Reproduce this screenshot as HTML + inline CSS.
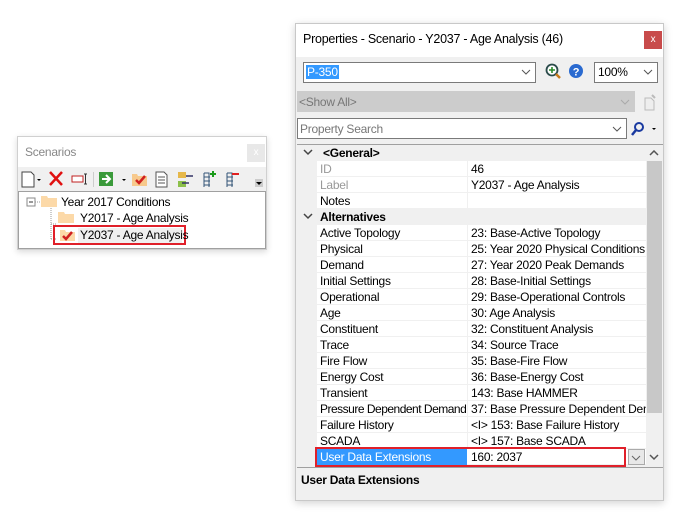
<!DOCTYPE html>
<html><head><style>
*{margin:0;padding:0;box-sizing:border-box}
body{width:688px;height:524px;background:#fff;font-family:"Liberation Sans",sans-serif;font-size:12px;color:#000;position:relative;overflow:hidden;letter-spacing:-0.25px}
.a{position:absolute}
.row{position:absolute;left:317px;width:329px;height:16px;border-bottom:1px solid #f0f0f0;background:#fff}
.row .n{position:absolute;left:3px;top:1px;white-space:nowrap;width:147px;overflow:hidden}
.row .v{position:absolute;left:154px;top:1px;white-space:nowrap;width:175px;overflow:hidden}
.row .d{position:absolute;left:150px;top:0;width:1px;height:16px;background:#f0f0f0}
.cat{position:absolute;left:297px;width:349px;height:16px;background:#f0f0f0;font-weight:bold}
.chev{position:absolute;left:6px;top:4px}
</style></head><body>
<!-- Scenarios window -->
<div class="a" style="left:17px;top:136px;width:250px;height:114px;border:1px solid #d0d0d0;background:#f0f0f0;box-shadow:0 2px 6px rgba(0,0,0,.15)"></div>
<div class="a" style="left:18px;top:137px;width:248px;height:30px;background:#fff"></div>
<div class="a" style="left:25px;top:145px;color:#888">Scenarios</div>
<div class="a" style="left:247px;top:144px;width:18px;height:18px;background:#e8e8e8;color:#fff;font-size:10px;text-align:center;line-height:18px">x</div>
<div class="a" style="left:18px;top:167px;width:248px;height:24px;background:#f0f0f0"></div>
<svg class="a" style="left:18px;top:167px" width="248" height="24">
<path d="M4 5h9l3 3v12H4z" fill="#fff" stroke="#444"/><path d="M19 12l2 2 2-2z" fill="#000"/>
<path d="M32 5l12 13M44 5L32 18" stroke="#e01010" stroke-width="2.5"/>
<rect x="54" y="9" width="11" height="6" fill="#fff" stroke="#c02020"/><path d="M66 7h3M67.5 7v10M66 17h3" stroke="#333"/>
<rect x="75" y="5" width="1" height="15" fill="#ccc"/>
<rect x="81" y="5" width="14" height="14" fill="#3a9a3a"/><path d="M84 12h7M88 8l4 4-4 4" stroke="#fff" stroke-width="2" fill="none"/>
<path d="M104 12l2 2 2-2z" fill="#000"/>
<path d="M114 7h5l1 2h9v10h-15z" fill="#f7c98c"/><path d="M118 13l3 3 6-7" stroke="#d02020" stroke-width="2.5" fill="none"/>
<path d="M138 5h8l3 3v12h-11z" fill="#fff" stroke="#555"/><path d="M140 10h7M140 13h7M140 16h7" stroke="#555"/>
<rect x="160" y="5" width="8" height="6" fill="#e6b84a"/><rect x="160" y="14" width="8" height="6" fill="#8cc04a"/><path d="M168 9h7M171 16h-7" stroke="#336" stroke-width="1.5"/>
<path d="M186 6h5v14M186 6v14M186 10h6M186 14h6M186 18h6" stroke="#357" fill="none"/><path d="M195 4v6M192 7h6" stroke="#1a9a1a" stroke-width="2"/>
<path d="M209 6h5v14M209 6v14M209 10h6M209 14h6M209 18h6" stroke="#357" fill="none"/><path d="M214 7h7" stroke="#e02020" stroke-width="2"/>
<rect x="237" y="12" width="8" height="8" fill="#ccc"/><path d="M238 15l3 3 3-3z" fill="#000"/>
</svg>
<div class="a" style="left:18px;top:191px;width:248px;height:58px;background:#fff;border:1px solid #a0a0a0"></div>
<svg class="a" style="left:20px;top:193px" width="180" height="52">
<rect x="7" y="5" width="8" height="8" fill="#fff" stroke="#888"/><path d="M9 9h4" stroke="#333"/>
<path d="M15 9h5M31 15v31M31 31h6M31 46h6" stroke="#999" stroke-dasharray="1 1"/>
<path d="M21 3h6l1 2h9v9H21z" fill="#fcd9a8"/>
<path d="M38 19h6l1 2h9v9H38z" fill="#fcd9a8"/>
</svg>
<div class="a" style="left:61px;top:195px">Year 2017 Conditions</div>
<div class="a" style="left:80px;top:211px">Y2017 - Age Analysis</div>
<div class="a" style="left:53px;top:225px;width:133px;height:20px;border:2px solid #e0202a"></div>
<svg class="a" style="left:58px;top:227px" width="20" height="16"><path d="M2 3h5l1 2h9v9H2z" fill="#fcd9a8"/><path d="M5 9l3 3 6-7" stroke="#d02020" stroke-width="2.5" fill="none"/></svg>
<div class="a" style="left:78px;top:228px;width:104px;height:15px;background:#f0f0f0"></div>
<div class="a" style="left:80px;top:228px">Y2037 - Age Analysis</div>

<!-- Properties window -->
<div class="a" style="left:295px;top:23px;width:369px;height:478px;border:1px solid #c8c8c8;background:#f0f0f0;box-shadow:0 2px 8px rgba(0,0,0,.18)"></div>
<div class="a" style="left:296px;top:24px;width:367px;height:33px;background:#fff"></div>
<div class="a" style="left:303px;top:32px;font-size:12.5px">Properties - Scenario - Y2037 - Age Analysis (46)</div>
<div class="a" style="left:644px;top:31px;width:18px;height:18px;background:#c84b4b;color:#fff;font-size:10px;text-align:center;line-height:18px">x</div>
<div class="a" style="left:303px;top:62px;width:233px;height:21px;background:#fff;border:1px solid #7a7a7a"></div>
<div class="a" style="left:306px;top:65px;background:#3399ff;color:#fff;line-height:14px;padding:0 1px">P-350</div>
<svg class="a" style="left:521px;top:69px" width="10" height="6"><path d="M1 1l4 4 4-4" stroke="#555" fill="none"/></svg>
<svg class="a" style="left:541px;top:60px" width="50" height="24">
<circle cx="11" cy="10" r="5.5" fill="#fff" stroke="#2a4a4a" stroke-width="1.8"/><path d="M8 10h6M11 7v6" stroke="#2a8a2a" stroke-width="1.6"/><path d="M15 14l4 4" stroke="#c87a1a" stroke-width="2.5"/>
<circle cx="35" cy="11" r="7" fill="#2a6ad0"/><text x="35" y="15.5" font-size="11" font-weight="bold" fill="#fff" text-anchor="middle" font-family="Liberation Sans">?</text>
</svg>
<div class="a" style="left:594px;top:62px;width:64px;height:21px;background:#fff;border:1px solid #7a7a7a"></div>
<div class="a" style="left:598px;top:65px">100%</div>
<svg class="a" style="left:643px;top:69px" width="10" height="6"><path d="M1 1l4 4 4-4" stroke="#555" fill="none"/></svg>
<div class="a" style="left:297px;top:91px;width:338px;height:21px;background:#cccccc"></div>
<div class="a" style="left:299px;top:95px;color:#777">&lt;Show All&gt;</div>
<svg class="a" style="left:620px;top:99px" width="10" height="6"><path d="M1 1l4 4 4-4" stroke="#aaa" fill="none"/></svg>
<svg class="a" style="left:642px;top:93px" width="16" height="18"><path d="M3 5h6l3 3v9H3z" fill="#eee" stroke="#bbb"/><path d="M10 2l3 3" stroke="#bbb" stroke-width="2"/></svg>
<div class="a" style="left:297px;top:118px;width:330px;height:21px;background:#fff;border:1px solid #7a7a7a"></div>
<div class="a" style="left:300px;top:122px;color:#777">Property Search</div>
<svg class="a" style="left:612px;top:126px" width="10" height="6"><path d="M1 1l4 4 4-4" stroke="#555" fill="none"/></svg>
<svg class="a" style="left:630px;top:119px" width="30" height="20"><circle cx="9" cy="8" r="4" fill="none" stroke="#1a3aa0" stroke-width="2"/><path d="M6 11l-4 5" stroke="#1a3aa0" stroke-width="2.5"/><path d="M22 9l2 2 2-2z" fill="#000"/></svg>
<!-- grid -->
<div class="a" style="left:297px;top:144px;width:366px;height:322px;background:#f0f0f0;border-top:1px solid #a0a0a0"></div>
<div class="cat" style="top:145px"><svg class="chev" width="10" height="7"><path d="M1 1l4 4 4-4" stroke="#444" stroke-width="1.5" fill="none"/></svg><span class="a" style="left:26px;top:1px">&lt;General&gt;</span></div>
<div class="row" style="top:161px;left:317px"><span class="n" style="color:#999">ID</span><span class="d"></span><span class="v">46</span></div>
<div class="row" style="top:177px"><span class="n" style="color:#999">Label</span><span class="d"></span><span class="v">Y2037 - Age Analysis</span></div>
<div class="row" style="top:193px"><span class="n">Notes</span><span class="d"></span><span class="v"></span></div>
<div class="cat" style="top:209px"><svg class="chev" width="10" height="7"><path d="M1 1l4 4 4-4" stroke="#444" stroke-width="1.5" fill="none"/></svg><span class="a" style="left:23px;top:1px">Alternatives</span></div>
<div class="row" style="top:225px"><span class="n">Active Topology</span><span class="d"></span><span class="v">23: Base-Active Topology</span></div>
<div class="row" style="top:241px"><span class="n">Physical</span><span class="d"></span><span class="v">25: Year 2020 Physical Conditions</span></div>
<div class="row" style="top:257px"><span class="n">Demand</span><span class="d"></span><span class="v">27: Year 2020 Peak Demands</span></div>
<div class="row" style="top:273px"><span class="n">Initial Settings</span><span class="d"></span><span class="v">28: Base-Initial Settings</span></div>
<div class="row" style="top:289px"><span class="n">Operational</span><span class="d"></span><span class="v">29: Base-Operational Controls</span></div>
<div class="row" style="top:305px"><span class="n">Age</span><span class="d"></span><span class="v">30: Age Analysis</span></div>
<div class="row" style="top:321px"><span class="n">Constituent</span><span class="d"></span><span class="v">32: Constituent Analysis</span></div>
<div class="row" style="top:337px"><span class="n">Trace</span><span class="d"></span><span class="v">34: Source Trace</span></div>
<div class="row" style="top:353px"><span class="n">Fire Flow</span><span class="d"></span><span class="v">35: Base-Fire Flow</span></div>
<div class="row" style="top:369px"><span class="n">Energy Cost</span><span class="d"></span><span class="v">36: Base-Energy Cost</span></div>
<div class="row" style="top:385px"><span class="n">Transient</span><span class="d"></span><span class="v">143: Base HAMMER</span></div>
<div class="row" style="top:401px"><span class="n" style="letter-spacing:-0.5px">Pressure Dependent Demand</span><span class="d"></span><span class="v">37: Base Pressure Dependent Demand</span></div>
<div class="row" style="top:417px"><span class="n">Failure History</span><span class="d"></span><span class="v">&lt;I&gt; 153: Base Failure History</span></div>
<div class="row" style="top:433px"><span class="n">SCADA</span><span class="d"></span><span class="v">&lt;I&gt; 157: Base SCADA</span></div>
<div class="row" style="top:449px"><span class="n" style="left:0;width:150px;height:16px;background:#3399ff;color:#fff;padding-left:3px;top:0;padding-top:1px">User Data Extensions</span><span class="v">160: 2037</span></div>
<div class="a" style="left:315px;top:447px;width:311px;height:20px;border:2px solid #e0202a"></div>
<div class="a" style="left:628px;top:449px;width:17px;height:16px;background:#e8e8e8;border:1px solid #aaa"></div>
<svg class="a" style="left:631px;top:455px" width="10" height="6"><path d="M1 1l4 4 4-4" stroke="#666" fill="none"/></svg>
<!-- scrollbar -->
<div class="a" style="left:646px;top:145px;width:17px;height:320px;background:#f0f0f0"></div>
<div class="a" style="left:647px;top:161px;width:15px;height:252px;background:#c8c8c8"></div>
<svg class="a" style="left:649px;top:150px" width="10" height="7"><path d="M1 5l4-4 4 4" stroke="#555" stroke-width="1.5" fill="none"/></svg>
<svg class="a" style="left:649px;top:454px" width="10" height="7"><path d="M1 1l4 4 4-4" stroke="#555" stroke-width="1.5" fill="none"/></svg>
<!-- description -->
<div class="a" style="left:297px;top:467px;width:366px;height:33px;background:#f0f0f0;border-top:1px solid #a0a0a0"></div>
<div class="a" style="left:301px;top:473px;font-weight:bold">User Data Extensions</div>
</body></html>
